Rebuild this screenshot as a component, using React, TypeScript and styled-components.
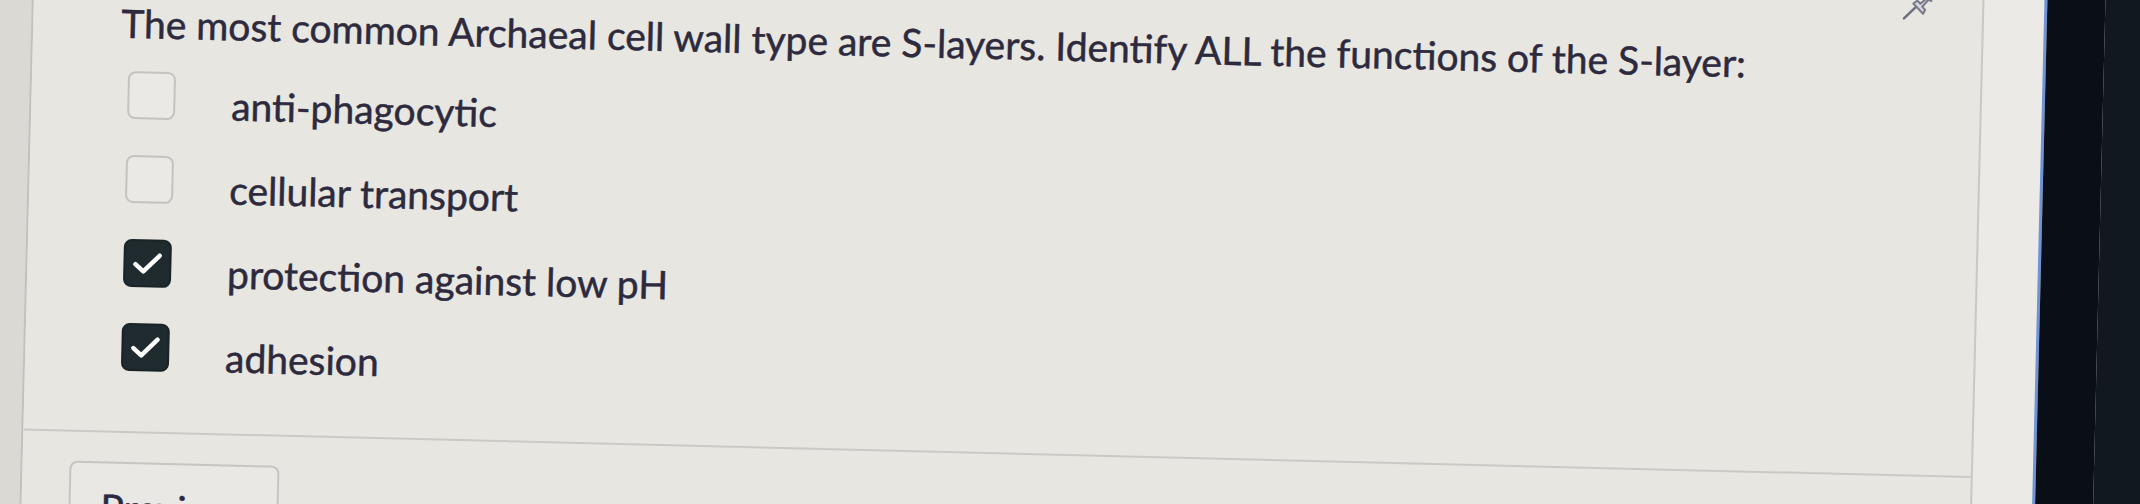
import styled, { createGlobalStyle } from "styled-components"

const GlobalStyle = createGlobalStyle`
	html, body {
		margin: 0;
		padding: 0;
		width: 2140px;
		height: 504px;
		overflow: hidden;
		background: #e6e5e0;
	}
	* {
		box-sizing: border-box;
	}
`

const options = [
	{ label: "anti-phagocytic", checked: false },
	{ label: "cellular transport", checked: false },
	{ label: "protection against low pH", checked: true },
	{ label: "adhesion", checked: true },
]

// the photo is taken slightly tilted, so the whole screen is rotated a bit
const Frame = styled.div`
	display: flex;
	width: 2220px;
	height: 584px;
	margin: -40px;
	transform: rotate(1.4deg);
	transform-origin: 1110px 292px;
	font-family: Lato, "Open Sans", sans-serif;
	color: #2d2a3e;
	-webkit-text-stroke: 0.5px #2d2a3e;
`

const LeftStrip = styled.div`
	width: 68px;
	flex-shrink: 0;
	background: #dad9d4;
	border-right: 2px solid #c2c1be;
`

const Panel = styled.div`
	position: relative;
	width: 1950px;
	flex-shrink: 0;
	background: #e7e6e1;
	border-right: 2px solid #c9c8c6;
	display: flex;
	flex-direction: column;
	overflow: hidden;

	& > * {
		flex-shrink: 0;
	}
`

const Content = styled.div`
	padding: 62px 0 0 88px;
	display: flex;
	flex-direction: column;
`

const Question = styled.div`
	font-size: 39px;
	line-height: 48px;
	font-weight: 400;
	white-space: nowrap;
`

const OptionList = styled.div`
	margin-top: 6px;
	display: flex;
	flex-direction: column;
`

const OptionRow = styled.div`
	height: 84px;
	display: flex;
	align-items: center;
	gap: 56px;
	padding-left: 8px;
`

const Box = styled.div<{ $checked: boolean }>`
	width: 48px;
	height: 48px;
	flex-shrink: 0;
	border-radius: 8px;
	display: flex;
	align-items: center;
	justify-content: center;
	background: ${(p) => (p.$checked ? "#1f2b2e" : "#eae9e5")};
	border: 2px solid ${(p) => (p.$checked ? "#1a2326" : "#c4c3c0")};
`

const Label = styled.span`
	font-size: 39px;
	line-height: 48px;
	padding-top: 15px;
	white-space: nowrap;
`

const Divider = styled.div`
	margin-top: 42px;
	height: 2px;
	background: #cac9c5;
`

const Footer = styled.div`
	padding: 29px 0 0 47px;
`

const PrevButton = styled.button`
	display: block;
	width: 210px;
	padding: 20px 0 30px 30px;
	border: 2px solid #c6c5c1;
	border-radius: 8px;
	background: #e9e8e4;
	font-family: Lato, "Open Sans", sans-serif;
	font-size: 39px;
	line-height: 48px;
	color: #2b2a40;
	-webkit-text-stroke: 0.5px #2b2a40;
	text-align: left;
`

const PinIcon = styled.svg`
	position: absolute;
	left: 1866px;
	top: 12px;
`

const SideStrip = styled.div`
	width: 60px;
	flex-shrink: 0;
	background: #ebeae7;
`

const BlueEdge = styled.div`
	width: 3px;
	flex-shrink: 0;
	background: #6f93d6;
`

const Bezel = styled.div`
	flex: 1;
	display: flex;
`

const BezelPart = styled.div<{ $tone: string }>`
	flex: ${(p) => (p.$tone === "dark" ? "0 0 58px" : "1")};
	background: ${(p) => (p.$tone === "dark" ? "#0a0f17" : "#121820")};
`

function Checkbox({ checked }: { checked: boolean }) {
	return (
		<Box $checked={checked}>
			{checked && (
				<svg width="32" height="26" viewBox="0 0 32 26">
					<polyline
						points="4,14 12,21 28,5"
						fill="none"
						stroke="#ffffff"
						strokeWidth="4.5"
						strokeLinecap="round"
						strokeLinejoin="round"
					/>
				</svg>
			)}
		</Box>
	)
}

export default function App() {
	return (
		<>
			<GlobalStyle />
			<Frame>
				<LeftStrip />
				<Panel>
					<PinIcon width="34" height="28" viewBox="0 0 34 28">
						<path d="M4 26 L15 15" stroke="#6f6e7c" strokeWidth="2.5" strokeLinecap="round" />
						<path
							d="M13 11 L23 21 L25 17 L22 14 L28 7 L31 8 L26 2 L27 5 L20 11 L17 8 Z"
							fill="#d8d7db"
							stroke="#7a7988"
							strokeWidth="2"
							strokeLinejoin="round"
						/>
					</PinIcon>
					<Content>
						<Question>
							The most common Archaeal cell wall type are S-layers. Identify ALL the functions of the S-layer:
						</Question>
						<OptionList>
							{options.map((o) => (
								<OptionRow key={o.label}>
									<Checkbox checked={o.checked} />
									<Label>{o.label}</Label>
								</OptionRow>
							))}
						</OptionList>
					</Content>
					<Divider />
					<Footer>
						<PrevButton>Previous</PrevButton>
					</Footer>
				</Panel>
				<SideStrip />
				<BlueEdge />
				<Bezel>
					<BezelPart $tone="dark" />
					<BezelPart $tone="light" />
				</Bezel>
			</Frame>
		</>
	)
}
